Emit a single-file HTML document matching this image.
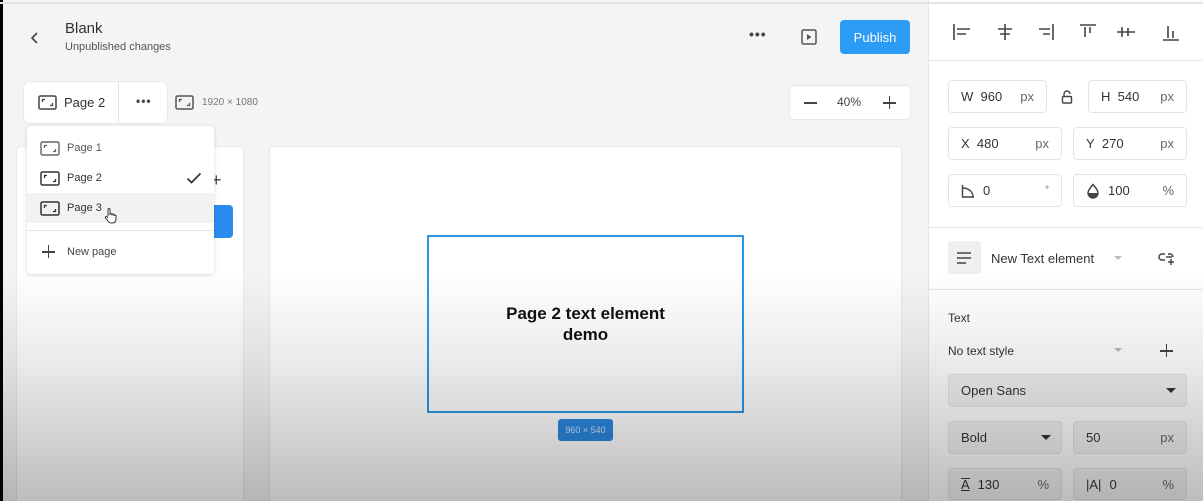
<!DOCTYPE html>
<html><head><meta charset="utf-8"><style>
*{box-sizing:border-box;margin:0;padding:0}
html{width:1203px;height:501px;overflow:hidden}
body{width:1203px;height:501px;overflow:hidden;background:#f4f4f4;font-family:"Liberation Sans",sans-serif;color:#333;position:relative}
.abs{position:absolute}
.card{background:#fff;border-radius:4px;box-shadow:0 0 0 1px #e8e8e8}
.field{position:absolute;background:#fff;border:1px solid #e4e4e4;border-radius:4px;height:33px;font-size:13px;color:#333;display:flex;align-items:center;padding:0 12px}
.field .u{margin-left:auto;color:#666}
.sep{position:absolute;left:928px;width:275px;height:1px;background:#e6e6e6}
svg{display:block}
.ic{position:absolute}
</style></head><body>
<div class="abs" style="left:0;top:0;width:3px;height:501px;background:#000"></div>
<div class="abs" style="left:0;top:2px;width:1203px;height:2px;background:#e2e2e2"></div>

<svg class="ic" style="left:30px;top:31px" width="10" height="14"><path d="M7 2 L2 7 L7 12" stroke="#444" stroke-width="1.6" fill="none"/></svg>
<div class="abs" style="left:65px;top:20px;font-size:15px;color:#333">Blank</div>
<div class="abs" style="left:65px;top:41px;font-size:11px;color:#555">Unpublished changes</div>
<div class="abs" style="left:749px;top:26px;font-size:14px;color:#444;letter-spacing:1px;font-weight:bold">•••</div>
<svg class="ic" style="left:801px;top:29px" width="16" height="16"><rect x="1" y="1" width="14" height="14" rx="1.5" fill="none" stroke="#555" stroke-width="1.5"/><path d="M6 5 L10.5 8 L6 11Z" fill="#555"/></svg>
<div class="abs" style="left:840px;top:20px;width:70px;height:34px;background:#2b9bf4;border-radius:4px;color:#fff;font-size:13px;display:flex;align-items:center;justify-content:center">Publish</div>

<div class="abs card" style="left:24px;top:82px;width:143px;height:41px;border-radius:6px"></div>
<div class="abs" style="left:118px;top:82px;width:1px;height:41px;background:#e6e6e6"></div>
<svg class="ic" style="left:38px;top:95px" width="19" height="15"><rect x="1" y="1" width="17" height="13" rx="1.5" fill="none" stroke="#444" stroke-width="1.5"/><path d="M4.5 7V4.5H7M14.5 8V10.5H12" stroke="#444" stroke-width="1.3" fill="none"/></svg>
<div class="abs" style="left:64px;top:95px;font-size:13px;color:#333">Page 2</div>
<div class="abs" style="left:136px;top:94px;font-size:12px;color:#444;font-weight:bold;letter-spacing:1px">•••</div>
<svg class="ic" style="left:175px;top:95px" width="19" height="15"><rect x="1" y="1" width="17" height="13" rx="1.5" fill="none" stroke="#555" stroke-width="1.5"/><path d="M4.5 7V4.5H7M14.5 8V10.5H12" stroke="#555" stroke-width="1.3" fill="none"/></svg>
<div class="abs" style="left:202px;top:97px;font-size:10px;color:#777">1920 × 1080</div>

<div class="abs card" style="left:790px;top:86px;width:120px;height:33px;border-radius:4px"></div>
<div class="abs" style="left:804px;top:102px;width:13px;height:1.6px;background:#444"></div>
<div class="abs" style="left:837px;top:95px;font-size:12px;color:#444">40%</div>
<div class="abs" style="left:883px;top:102px;width:13px;height:1.6px;background:#444"></div>
<div class="abs" style="left:888.7px;top:96px;width:1.6px;height:13px;background:#444"></div>

<div class="abs card" style="left:17px;top:147px;width:226px;height:354px;border-radius:4px 4px 0 0"></div>
<div class="abs" style="left:211px;top:170px;font-size:18px;color:#444">+</div>
<div class="abs" style="left:150px;top:205px;width:83px;height:33px;background:#2b8cf0;border-radius:4px"></div>
<div class="abs card" style="left:270px;top:147px;width:631px;height:354px;border-radius:4px 4px 0 0"></div>
<div class="abs" style="left:427px;top:235px;width:317px;height:178px;border:2px solid #2e96e6"></div>
<div class="abs" style="left:427px;top:303px;width:317px;text-align:center;font-size:17px;font-weight:bold;color:#111;line-height:21px">Page 2 text element<br>demo</div>
<div class="abs" style="left:558px;top:419px;width:55px;height:22px;background:#2a88e0;border-radius:3px;color:#cfe5fb;font-size:9px;display:flex;align-items:center;justify-content:center">960 × 540</div>

<div class="abs" style="left:27px;top:126px;width:187px;height:148px;background:#fff;border-radius:4px;box-shadow:0 1px 4px rgba(0,0,0,.15)"></div>
<div class="abs" style="left:27px;top:193px;width:187px;height:30px;background:#f2f2f2"></div>
<div class="abs" style="left:27px;top:230px;width:187px;height:1px;background:#e6e6e6"></div>
<svg class="ic" style="left:40px;top:141px" width="20" height="15"><rect x="1" y="1" width="18" height="13" rx="1.5" fill="none" stroke="#666" stroke-width="1.4"/><path d="M4.5 7V4.5H7M15.5 8V10.5H13" stroke="#666" stroke-width="1.3" fill="none"/></svg>
<div class="abs" style="left:67px;top:142px;font-size:11px;color:#555">Page 1</div>
<svg class="ic" style="left:40px;top:171px" width="20" height="15"><rect x="1" y="1" width="18" height="13" rx="1.5" fill="none" stroke="#333" stroke-width="1.5"/><path d="M4.5 7V4.5H7M15.5 8V10.5H13" stroke="#333" stroke-width="1.3" fill="none"/></svg>
<div class="abs" style="left:67px;top:172px;font-size:11px;color:#333">Page 2</div>
<svg class="ic" style="left:186px;top:171px" width="16" height="14"><path d="M1.5 7.5 L5.5 11.5 L14.5 2.5" stroke="#333" stroke-width="1.7" fill="none"/></svg>
<svg class="ic" style="left:40px;top:201px" width="20" height="15"><rect x="1" y="1" width="18" height="13" rx="1.5" fill="none" stroke="#333" stroke-width="1.5"/><path d="M4.5 7V4.5H7M15.5 8V10.5H13" stroke="#333" stroke-width="1.3" fill="none"/></svg>
<div class="abs" style="left:67px;top:202px;font-size:11px;color:#333">Page 3</div>
<svg class="ic" style="left:104px;top:207px" width="14" height="17"><path d="M4 9V2.5a1 1 0 0 1 2 0V8 M6 7.5a1 1 0 0 1 2 0V8.5 M8 8a1 1 0 0 1 2 0V9 M10 9a1 1 0 0 1 2 0v3c0 2.5-1.5 4-4 4H7c-1.5 0-2.5-1-3.5-2.5L1.5 11a1 1 0 0 1 1.5-1.3L4 11" fill="#fff" stroke="#333" stroke-width="1"/></svg>
<div class="abs" style="left:42px;top:251px;width:13px;height:1.5px;background:#444"></div>
<div class="abs" style="left:47.7px;top:245px;width:1.5px;height:13px;background:#444"></div>
<div class="abs" style="left:67px;top:246px;font-size:11px;color:#444">New page</div>

<div class="abs" style="left:928px;top:0;width:275px;height:501px;background:#fff;border-left:1px solid #e6e6e6"></div>
<div class="abs" style="left:928px;top:2px;width:275px;height:2px;background:#e2e2e2"></div>
<svg class="ic" style="left:952px;top:22px" width="240" height="20" stroke="#444" stroke-width="1.6" fill="none">
<path d="M2 2V18 M5 7H18 M5 12H14"/>
<path d="M53 2V18 M46 7H60 M48 12H58"/>
<path d="M101 2V18 M87 7H98 M91 12H98"/>
<path d="M128 3H144 M133 5V15 M138 5V11"/>
<path d="M170 5V15 M176 6V14 M165 10H183"/>
<path d="M211 18H227 M216 4V16 M221 9V16"/>
</svg>
<div class="sep" style="top:60px"></div>
<div class="field" style="left:948px;top:80px;width:99px">W&nbsp; 960<span class="u">px</span></div>
<svg class="ic" style="left:1061px;top:90px" width="12" height="14"><path d="M3 6V4a3 3 0 0 1 6 0" stroke="#444" stroke-width="1.4" fill="none"/><rect x="1.5" y="6.5" width="9" height="6.5" rx="1" fill="none" stroke="#444" stroke-width="1.4"/></svg>
<div class="field" style="left:1088px;top:80px;width:99px">H&nbsp; 540<span class="u">px</span></div>
<div class="field" style="left:948px;top:127px;width:114px">X&nbsp; 480<span class="u">px</span></div>
<div class="field" style="left:1073px;top:127px;width:114px">Y&nbsp; 270<span class="u">px</span></div>
<div class="field" style="left:948px;top:174px;width:114px"><svg width="14" height="14" style="margin-right:8px"><path d="M1.5 1V13H13 M1.5 4C8 4 12 8 12 13" stroke="#444" stroke-width="1.4" fill="none"/></svg>0<span class="u" style="font-size:10px">°</span></div>
<div class="field" style="left:1073px;top:174px;width:114px"><svg width="14" height="16" style="margin-right:8px"><path d="M7 1.5C4 5 2 7.5 2 10a5 5 0 0 0 10 0c0-2.5-2-5-5-8.5Z" fill="none" stroke="#444" stroke-width="1.4"/><path d="M2 10h10a5 5 0 0 1-10 0Z" fill="#444"/></svg>100<span class="u">%</span></div>
<div class="sep" style="top:227px"></div>
<div class="abs" style="left:948px;top:241px;width:33px;height:33px;background:#efefef;border-radius:3px"></div>
<svg class="ic" style="left:956px;top:252px" width="16" height="12" stroke="#444" stroke-width="1.5"><path d="M1 1H15M1 6H15M1 11H10"/></svg>
<div class="abs" style="left:991px;top:251px;font-size:13px;color:#333">New Text element</div>
<div class="abs" style="left:1114px;top:256px;border:4px solid transparent;border-top:4px solid #bbb"></div>
<svg class="ic" style="left:1157px;top:250px" width="20" height="16"><path d="M8 4H5a3 3 0 0 0 0 6h3M9 7h6M11 4h2a3 3 0 0 1 3 3" stroke="#444" stroke-width="1.5" fill="none"/><path d="M14 9v6M11 12h6" stroke="#444" stroke-width="1.5"/></svg>
<div class="sep" style="top:289px"></div>
<div class="abs" style="left:948px;top:311px;font-size:12px;color:#333">Text</div>
<div class="abs" style="left:948px;top:344px;font-size:12px;color:#333">No text style</div>
<div class="abs" style="left:1114px;top:348px;border:4px solid transparent;border-top:4px solid #bbb"></div>
<div class="abs" style="left:1160px;top:350px;width:13px;height:1.5px;background:#444"></div>
<div class="abs" style="left:1165.7px;top:344px;width:1.5px;height:13px;background:#444"></div>
<div class="field" style="left:948px;top:374px;width:239px;background:#f2f2f2">Open Sans<span class="u" style="width:0;height:0;border:5px solid transparent;border-top:5px solid #333;margin-top:5px;margin-right:-2px"></span></div>
<div class="field" style="left:948px;top:421px;width:114px;background:#f2f2f2">Bold<span class="u" style="width:0;height:0;border:5px solid transparent;border-top:5px solid #333;margin-top:5px;margin-right:-2px"></span></div>
<div class="field" style="left:1073px;top:421px;width:114px;background:#f2f2f2">50<span class="u">px</span></div>
<div class="field" style="left:948px;top:468px;width:114px;height:32px;background:#f2f2f2"><span style="border-top:1.5px solid #444;line-height:12px;text-decoration:underline;margin-right:8px">A</span>130<span class="u">%</span></div>
<div class="field" style="left:1073px;top:468px;width:114px;height:32px;background:#f2f2f2"><span style="margin-right:8px">|A|</span>0<span class="u">%</span></div>

<div class="abs" style="left:0;top:0;width:1203px;height:501px;pointer-events:none;background:linear-gradient(to bottom,rgba(0,0,0,0) 0,rgba(0,0,0,0) 270px,rgba(0,0,0,0.08) 360px,rgba(0,0,0,0.26) 501px)"></div>
</body></html>
